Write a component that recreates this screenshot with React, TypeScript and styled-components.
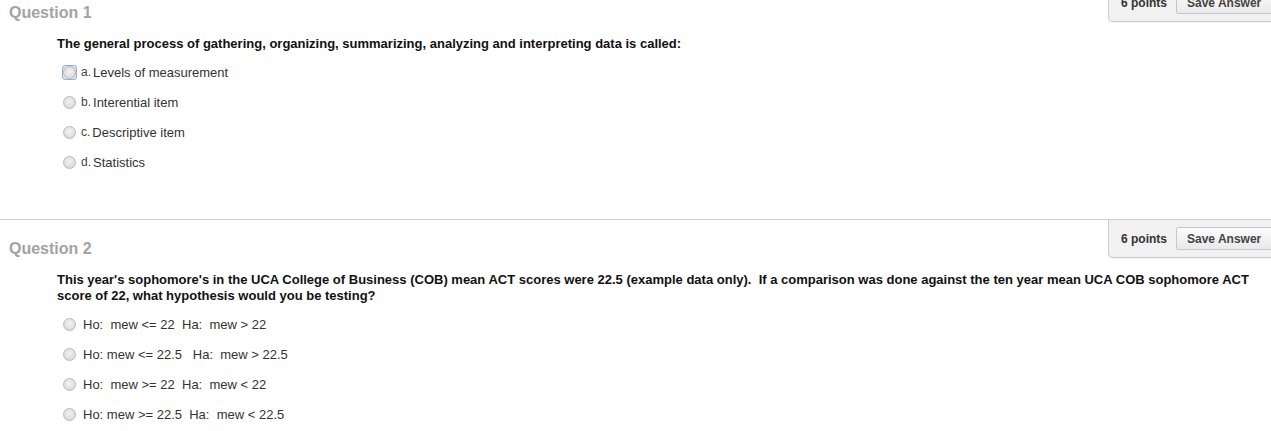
import React from "react";
import styled, { createGlobalStyle } from "styled-components";

const Global = createGlobalStyle`
  html, body { margin: 0; padding: 0; background: #fff; }
  body { font-family: "Liberation Sans", Arial, sans-serif; overflow: hidden; width: 1271px; height: 431px; }
`;

const Page = styled.div`
  width: 1271px;
  overflow: hidden;
`;

const Block = styled.section<{ $first?: boolean }>`
  margin-top: ${(p) => (p.$first ? "-16px" : "0")};
  border-top: ${(p) => (p.$first ? "none" : "1px solid #cfcfcf")};
  padding-bottom: ${(p) => (p.$first ? "42px" : "0")};
`;

const Header = styled.div`
  display: flex;
  justify-content: space-between;
  align-items: flex-end;
`;

const Heading = styled.h3`
  margin: 0 0 0 9px;
  font-size: 16px;
  line-height: 19px;
  font-weight: bold;
  color: #a3a3a3;
`;

const PointsBox = styled.div`
  display: flex;
  align-items: center;
  gap: 9px;
  height: 38px;
  box-sizing: border-box;
  padding: 0 0 0 12px;
  margin-right: -20px;
  background: #f1f1f1;
  border: 1px solid #cdcdcd;
  border-top: none;
  border-radius: 0 0 0 5px;
  box-shadow: 0 1px 1px rgba(0, 0, 0, 0.05);
`;

const Points = styled.span`
  font-size: 12px;
  font-weight: bold;
  color: #333;
`;

const SaveButton = styled.button`
  font-family: "Liberation Sans", Arial, sans-serif;
  font-size: 12px;
  font-weight: bold;
  color: #444;
  height: 23px;
  padding: 0 10px;
  width: 114px;
  text-align: left;
  border: 1px solid #c6c6c6;
  border-radius: 2px;
  background: linear-gradient(#fbfbfb, #e9e9e9);
`;

const Body = styled.div`
  padding: 14px 0 0 57px;
  width: 1198px;
`;

const QuestionText = styled.p`
  margin: 0 0 5px;
  font-size: 13px;
  line-height: 16px;
  font-weight: bold;
  color: #111;
  white-space: pre-wrap;
`;

const Options = styled.ul`
  list-style: none;
  margin: 0;
  padding: 0;
`;

const Option = styled.li`
  display: flex;
  align-items: center;
  height: 30px;
  font-size: 13px;
  color: #333;
`;

const RadioWrap = styled.span<{ $focus?: boolean }>`
  width: 15px;
  height: 15px;
  margin: 0 4px 0 5px;
  display: flex;
  align-items: center;
  justify-content: center;
  box-sizing: border-box;
  border-radius: 3px;
  border: 1px solid ${(p) => (p.$focus ? "#8fb0d9" : "transparent")};
  background: ${(p) => (p.$focus ? "#dbe7f5" : "transparent")};
`;

const Radio = styled.span`
  width: 11px;
  height: 11px;
  border-radius: 50%;
  border: 1px solid #b9b9b9;
  background: radial-gradient(circle at 50% 40%, #f2f2f2 0%, #dcdcdc 70%, #cfcfcf 100%);
`;

const Letter = styled.span`
  font-size: 12px;
  color: #444;
  margin-right: 2px;
`;

const Label = styled.span<{ $plain?: boolean }>`
  white-space: pre;
  margin-left: ${(p) => (p.$plain ? "2px" : "0")};
`;

type Q = {
  n: number;
  text: string;
  options: { letter?: string; text: string }[];
  first?: boolean;
  focusFirst?: boolean;
};

const questions: Q[] = [
  {
    n: 1,
    first: true,
    focusFirst: true,
    text: "The general process of gathering, organizing, summarizing, analyzing and interpreting data is called:",
    options: [
      { letter: "a.", text: "Levels of measurement" },
      { letter: "b.", text: "Interential item" },
      { letter: "c.", text: "Descriptive item" },
      { letter: "d.", text: "Statistics" },
    ],
  },
  {
    n: 2,
    text:
      "This year's sophomore's in the UCA College of Business (COB) mean ACT scores were 22.5 (example data only).  If a comparison was done against the ten year mean UCA COB sophomore ACT score of 22, what hypothesis would you be testing?",
    options: [
      { text: "Ho:  mew <= 22  Ha:  mew > 22" },
      { text: "Ho: mew <= 22.5   Ha:  mew > 22.5" },
      { text: "Ho:  mew >= 22  Ha:  mew < 22" },
      { text: "Ho: mew >= 22.5  Ha:  mew < 22.5" },
    ],
  },
];

export default function App() {
  return (
    <Page>
      <Global />
      {questions.map((q) => (
        <Block key={q.n} $first={q.first}>
          <Header>
            <Heading>Question {q.n}</Heading>
            <PointsBox>
              <Points>6 points</Points>
              <SaveButton>Save Answer</SaveButton>
            </PointsBox>
          </Header>
          <Body>
            <QuestionText>{q.text}</QuestionText>
            <Options>
              {q.options.map((o, i) => (
                <Option key={i}>
                  <RadioWrap $focus={q.focusFirst && i === 0}>
                    <Radio />
                  </RadioWrap>
                  {o.letter && <Letter>{o.letter}</Letter>}
                  <Label $plain={!o.letter}>{o.text}</Label>
                </Option>
              ))}
            </Options>
          </Body>
        </Block>
      ))}
    </Page>
  );
}
